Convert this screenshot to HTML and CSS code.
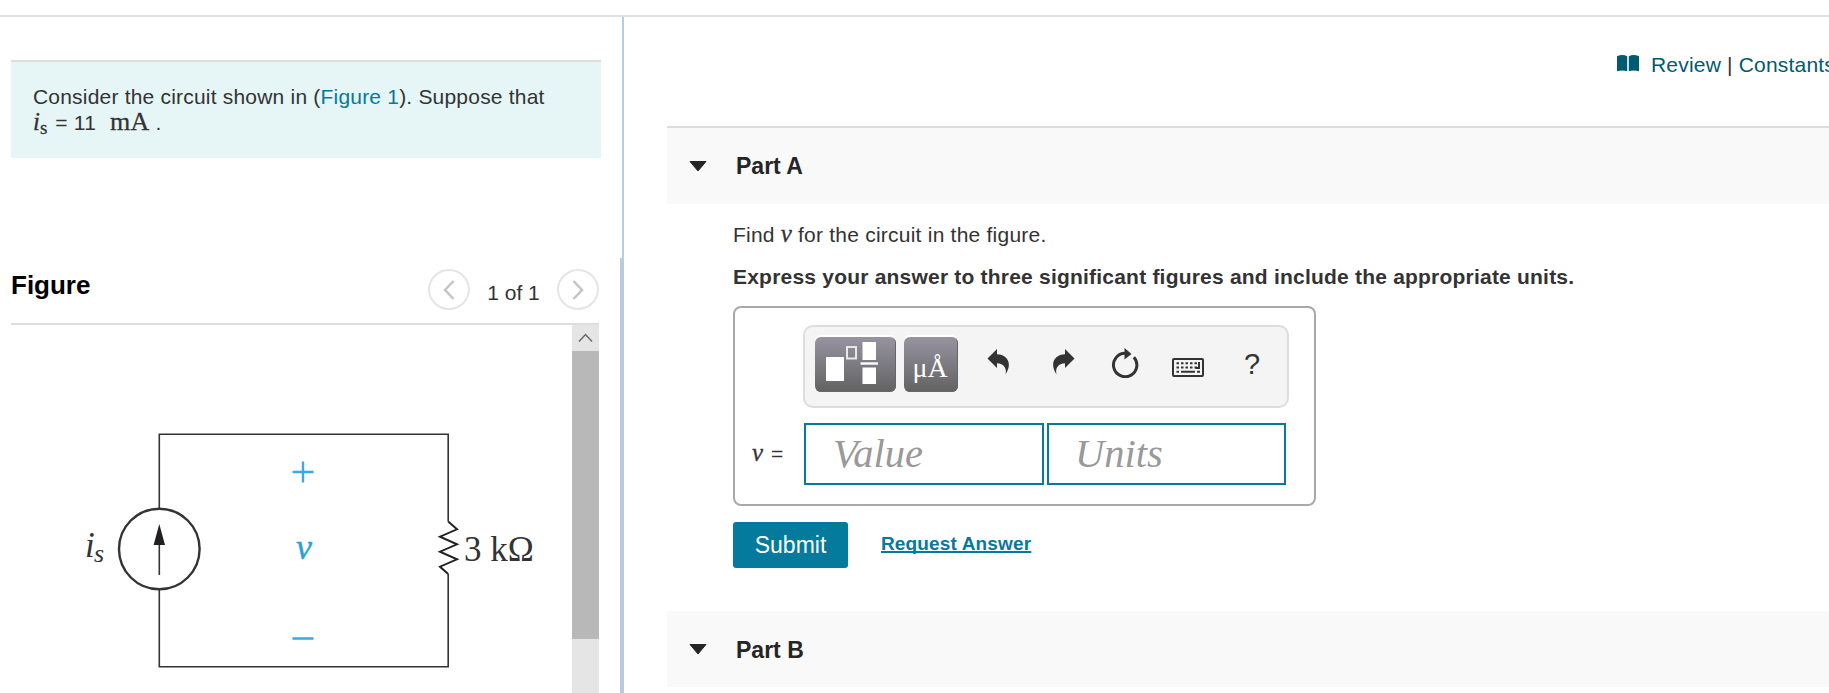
FILE: index.html
```html
<!DOCTYPE html>
<html lang="en">
<head>
    <meta charset="UTF-8">
    <meta name="viewport" content="width=device-width, initial-scale=1.0">
    <title>Circuit Problem</title>
    <link rel="stylesheet" href="styles.css">
</head>
<body>
    <div class="page">
        <div class="left">
            <div class="problem">
                Consider the circuit shown in (<a href="#figure">Figure 1</a>). Suppose that<br>
                <span class="math"><i>i</i><sub>s</sub></span><span class="equals">=</span><span class="amount">11</span><span class="unit">mA</span>.
            </div>

            <div class="figure-panel" id="figure">
                <div class="figure-header">
                    <h2>Figure</h2>
                    <button class="round-btn" aria-label="Previous">
                        <svg width="12" height="20" viewBox="0 0 12 20"><path d="M10.5 1 L2 10 L10.5 19"/></svg>
                    </button>
                    <span class="count">1 of 1</span>
                    <button class="round-btn" aria-label="Next">
                        <svg width="12" height="20" viewBox="0 0 12 20"><path d="M1.5 1 L10 10 L1.5 19"/></svg>
                    </button>
                </div>
                <div class="figure-body">
                    <svg class="circuit" width="561" height="368" viewBox="11 325 561 368">
                        <!-- wires -->
                        <path class="wire" d="M159.3 508 V434.2 H448.2 V521.5 M448.2 574 V666.7 H159.3 V590"/>
                        <path class="resistor" d="M448.2 521.5 L457 529.3 L440 536.7 L457 544.3 L440 551.7 L457 559.3 L440 566.7 L448.2 574"/>
                        <!-- current source -->
                        <circle class="source" cx="159.3" cy="549" r="40.3"/>
                        <path class="wire" d="M159.3 575 V540"/>
                        <path class="arrow" d="M159.3 524 L165 545 H153.6 Z"/>
                        <text class="label italic" x="85" y="556.5">i</text>
                        <text class="label italic small" x="94" y="562">s</text>
                        <text class="label" x="464" y="560.5">3 kΩ</text>
                        <!-- voltage -->
                        <path class="sign" d="M292.5 472 H313.5 M303 461.5 V482.5 M292.5 638.5 H313.5"/>
                        <text class="label italic volt" x="296" y="559">v</text>
                    </svg>
                    <div class="scrollbar">
                        <div class="scroll-up">
                            <svg width="15" height="10" viewBox="0 0 15 10"><path d="M1 8.5 L7.5 1.5 L14 8.5"/></svg>
                        </div>
                        <div class="scroll-thumb"></div>
                    </div>
                </div>
            </div>
        </div>

        <div class="right">
            <div class="links">
                <svg width="22" height="17" viewBox="0 0 22 17"><path d="M0 1.2 Q5.5 -1 10.2 1.2 V16.3 Q5.5 14.8 0 16.3 Z M11.8 1.2 Q16.5 -1 22 1.2 V16.3 Q16.5 14.8 11.8 16.3 Z"/></svg>
                <a class="review" href="#">Review</a><span class="bar">|</span><a href="#">Constants</a>
            </div>

            <div class="part-header first">
                <svg class="caret" width="18" height="11" viewBox="0 0 18 11"><path d="M1 0.5 H17 L9 10 Z"/></svg>
                <h3>Part A</h3>
            </div>
            <div class="part-body">
                <p class="find">Find <i class="math">v</i> for the circuit in the figure.</p>
                <p class="express">Express your answer to three significant figures and include the appropriate units.</p>

                <div class="answer">
                    <div class="toolbar">
                        <button class="tool templates" aria-label="Templates">
                            <svg width="54" height="44" viewBox="0 0 54 44">
                                <rect x="0" y="16" width="18" height="24"/>
                                <rect class="hollow" x="21" y="6" width="9" height="11.5"/>
                                <rect x="36.5" y="1" width="13.5" height="18"/>
                                <rect x="34.5" y="21.3" width="17.5" height="2.4"/>
                                <rect x="36.5" y="26.5" width="13.5" height="16.5"/>
                            </svg>
                        </button>
                        <button class="tool units-btn">μÅ</button>
                        <div class="actions">
                            <svg width="24" height="26" viewBox="0 0 24 26"><path d="M0.5 9.5 L10 0 V5.3 C20 5.6 26 14 18.5 25.5 C20 19.5 17 14.2 10 14.2 V19 Z"/></svg>
                            <svg width="24" height="26" viewBox="0 0 24 26"><path d="M23.5 9.5 L14 0 V5.3 C4 5.6 -2 14 5.5 25.5 C4 19.5 7 14.2 14 14.2 V19 Z"/></svg>
                            <svg class="reset" width="28" height="30" viewBox="0 0 28 30"><path class="ring" d="M22.9 9.2 A11.7 11.7 0 1 1 14 5.3"/><path d="M13.5 0 L20.5 6 L13.5 11.5 Z"/></svg>
                            <svg class="keyboard" width="32" height="19" viewBox="0 0 32 19">
                                <rect class="case" x="1" y="1" width="30" height="17" rx="1"/>
                                <path class="keys" d="M4.5 5.3 H25 M4.5 9.5 H25"/>
                                <path class="enter" d="M27 4 V10 H23.5"/>
                                <path class="space" d="M4.5 13.8 H7 M9 13.8 H23 M25 13.8 H28"/>
                            </svg>
                            <span class="help">?</span>
                        </div>
                    </div>
                    <div class="fields">
                        <label for="value"><i class="math">v</i> =</label>
                        <input type="text" id="value" placeholder="Value">
                        <input type="text" id="units" placeholder="Units">
                    </div>
                </div>

                <div class="submit-row">
                    <button class="submit">Submit</button>
                    <a href="#">Request Answer</a>
                </div>
            </div>

            <div class="part-header">
                <svg class="caret" width="18" height="11" viewBox="0 0 18 11"><path d="M1 0.5 H17 L9 10 Z"/></svg>
                <h3>Part B</h3>
            </div>
        </div>
    </div>
</body>
</html>
```
FILE: styles.css
```css
* {
    box-sizing: border-box;
}

body {
    margin: 0;
    padding-top: 15px;
    height: 693px;
    overflow: hidden;
    font-family: "Liberation Sans", Arial, sans-serif;
    font-size: 21px;
    color: #333;
    background-color: #fff;
}

h2, h3, p {
    margin: 0;
}

button {
    padding: 0;
    border: none;
    font-family: inherit;
    cursor: pointer;
}

a {
    color: #047a9c;
    text-decoration: none;
}

.math {
    font-family: "Liberation Serif", "Times New Roman", serif;
    font-size: 25px;
    line-height: 0;
    letter-spacing: 0;
    -webkit-text-stroke: 0.3px #333;
}

.page {
    display: flex;
    height: 678px;
    border-top: 2px solid #e0e0e0;
}

/* left column */
.left {
    display: flex;
    flex-direction: column;
    width: 624px;
    flex-shrink: 0;
    background: linear-gradient(#b8ccdc, #b8ccdc) right top / 2px 100% no-repeat;
}

.problem {
    width: 590px;
    height: 98px;
    margin: 43px 0 0 11px;
    padding: 22px 0 0 22px;
    border-top: 2px solid #ddd;
    background-color: #e6f6f7;
    line-height: 26px;
    letter-spacing: 0.2px;
    white-space: nowrap;
}

.problem sub {
    font-size: 19px;
    vertical-align: -4px;
}

.equals {
    margin-left: 8px;
}

.amount {
    margin-left: 6px;
}

.unit {
    margin: 0 6px 0 14px;
    font-family: "Liberation Serif", "Times New Roman", serif;
    font-size: 26px;
    line-height: 0;
    -webkit-text-stroke: 0.3px #333;
}

.figure-panel {
    flex: 1;
    margin-top: 100px;
    padding: 11px 21px 0 11px;
    border-right: 4px solid #b8ccdc;
}

.figure-header {
    display: flex;
    width: 588px;
    height: 56px;
    border-bottom: 2px solid #ddd;
}

.figure-header h2 {
    margin: 1px auto 0 0;
    font-size: 26px;
    line-height: 30px;
    color: #000;
}

.round-btn {
    display: flex;
    align-items: center;
    justify-content: center;
    width: 42px;
    height: 41px;
    border: 2px solid #e5e5e5;
    border-radius: 50%;
    background-color: #fff;
}

.round-btn path {
    fill: none;
    stroke: #c4c4c4;
    stroke-width: 2.5;
}

.count {
    width: 87px;
    margin-top: 12px;
    line-height: 24px;
    text-align: center;
}

.figure-body {
    display: flex;
    width: 588px;
    height: 368px;
}

.circuit {
    flex-shrink: 0;
}

.wire, .resistor, .source {
    fill: none;
    stroke: #333;
    stroke-width: 1.6;
}

.resistor {
    stroke: #222;
    stroke-width: 2;
}

.source {
    stroke-width: 2.4;
}

.arrow {
    fill: #231f20;
}

.label {
    font-family: "Liberation Serif", "Times New Roman", serif;
    font-size: 35px;
    fill: #333;
}

.italic {
    font-style: italic;
}

.small {
    font-size: 26px;
}

.sign {
    stroke: #3aa9de;
    stroke-width: 2.4;
}

.volt {
    font-size: 36px;
    fill: #2a9fd8;
    stroke: #2a9fd8;
    stroke-width: 0.4;
}

.scrollbar {
    width: 27px;
    background-color: #e5e5e5;
}

.scroll-up {
    display: flex;
    align-items: center;
    justify-content: center;
    height: 26px;
}

.scroll-up path {
    fill: none;
    stroke: #666;
    stroke-width: 1.4;
}

.scroll-thumb {
    height: 288px;
    background-color: #b8b8b8;
}

/* right column */
.right {
    flex: 1;
    min-width: 0;
    padding-left: 43px;
}

.links {
    display: flex;
    height: 109px;
    padding: 36px 0 0 950px;
    line-height: 24px;
    letter-spacing: 0.2px;
    white-space: nowrap;
}

.links svg {
    flex-shrink: 0;
    margin-top: 2px;
    fill: #005a70;
}

.links a {
    color: #005a70;
}

.links .review {
    margin-left: 12px;
}

.bar {
    margin: 0 6px;
}

.part-header {
    display: flex;
    height: 76px;
    padding-left: 22px;
    background-color: #f9f9f9;
    color: #252525;
}

.part-header.first {
    height: 78px;
    border-top: 2px solid #ddd;
}

.caret {
    margin-top: 33px;
    fill: #252525;
    stroke: #252525;
    stroke-linejoin: round;
}

.part-header h3 {
    margin: 26px 0 0 29px;
    font-size: 23px;
    line-height: 26px;
}

.part-header.first h3 {
    margin-top: 25px;
}

.part-body {
    height: 407px;
    padding: 19px 0 0 66px;
}

.find {
    line-height: 24px;
    letter-spacing: 0.23px;
}

.express {
    margin-top: 18px;
    font-weight: bold;
    line-height: 24px;
    letter-spacing: 0.21px;
}

.answer {
    width: 583px;
    height: 200px;
    margin-top: 17px;
    padding: 17px 0 0 17px;
    border: 2px solid #a9a9a9;
    border-radius: 8px;
}

.toolbar {
    display: flex;
    width: 486px;
    height: 83px;
    margin-left: 51px;
    padding: 10px 0 0 10px;
    border: 2px solid #ddd;
    border-radius: 10px;
    background-color: #f4f4f4;
}

.tool {
    width: 81px;
    height: 55px;
    border-radius: 6px;
    background: linear-gradient(#9794a0, #626262);
    color: #fff;
    box-shadow: 0 -2px 0 #fff, inset -1px -1px 0 #666;
}

.templates {
    padding-right: 5px;
}

.templates rect {
    fill: #fff;
}

.templates .hollow {
    fill: none;
    stroke: #e8e8e8;
    stroke-width: 2;
}

.units-btn {
    width: 54px;
    margin-left: 8px;
    padding: 6px 2px 0 0;
    font-family: "Liberation Serif", "Times New Roman", serif;
    font-size: 28px;
}

.actions {
    display: flex;
    margin-left: 29px;
    fill: #333;
}

.actions svg {
    margin: 12px 40px 0 0;
}

.actions .reset {
    margin: 11px 32px 0 -4px;
}

.actions .ring {
    fill: none;
    stroke: #333;
    stroke-width: 3;
}

.actions .keyboard {
    margin: 21px 40px 0 1px;
}

.keyboard path, .keyboard rect {
    fill: none;
    stroke: #333;
    stroke-width: 2;
}

.keyboard .keys {
    stroke-dasharray: 2.5 2;
}

.help {
    margin-top: 10px;
    font-size: 29px;
    line-height: 34px;
}

.fields {
    display: flex;
    margin-top: 15px;
}

.fields label {
    width: 52px;
    padding-top: 19px;
    line-height: 24px;
    white-space: nowrap;
}

.fields label .math {
    margin-right: 2px;
}

.fields input {
    width: 240px;
    height: 62px;
    padding: 0 0 2px 27px;
    border: 2px solid #047a9c;
    background-color: #fff;
    font-family: "Liberation Serif", "Times New Roman", serif;
    font-size: 40.5px;
    font-style: italic;
}

.fields #units {
    width: 239px;
    margin-left: 3px;
    padding-left: 26px;
}

.fields input::placeholder {
    color: #999;
}

.submit-row {
    display: flex;
    margin-top: 16px;
}

.submit {
    width: 115px;
    height: 46px;
    border-radius: 3px;
    background-color: #047a9c;
    color: #fff;
    font-size: 23px;
}

.submit-row a {
    margin: 10px 0 0 33px;
    font-size: 19px;
    font-weight: bold;
    line-height: 24px;
    letter-spacing: 0.15px;
    text-decoration: underline;
    text-decoration-skip-ink: none;
    text-decoration-thickness: 2px;
}
```
